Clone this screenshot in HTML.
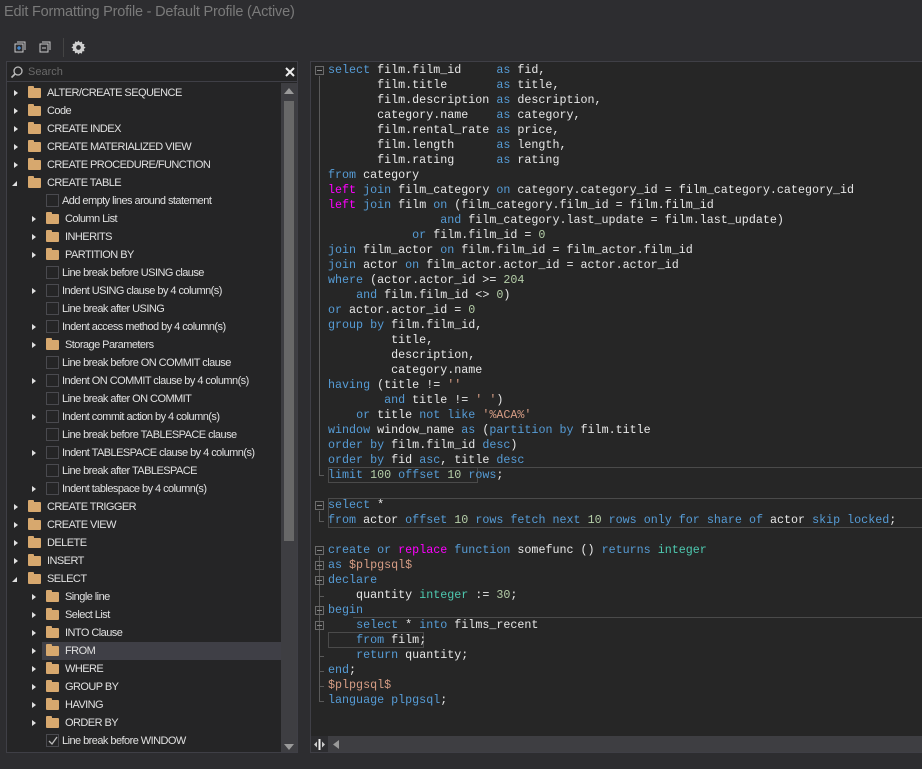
<!DOCTYPE html>
<html><head><style>
*{margin:0;padding:0;box-sizing:border-box}
body{width:922px;height:769px;background:#2d2d30;position:relative;overflow:hidden;font-family:"Liberation Sans",sans-serif}
.title{position:absolute;left:4px;top:4px;font-size:14.5px;color:#7a7a7a;letter-spacing:-0.2px}
.tb{position:absolute;top:40px}
.tree{position:absolute;left:6px;top:61px;width:292px;height:692px;border:1px solid #3f3f46;background:#252526;overflow:hidden}
.search{position:absolute;left:0;top:0;width:290px;height:20px;border-bottom:1px solid #3f3f46;background:#252526}
.search span{position:absolute;left:21px;top:4px;font-size:11px;color:#6a6a6a}
.sb{position:absolute;left:274px;top:21px;width:16px;height:670px;background:#3e3e42}
.thumb{position:absolute;left:3px;top:18px;width:10px;height:440px;background:#686868}
.row{position:absolute;left:0;height:18px;width:274px;font-size:11px;color:#e0e0e0;letter-spacing:-0.55px;line-height:18px;white-space:nowrap}
.row.sel{background:#3f3f46}
.arr{position:absolute;top:6px;width:0;height:0;border-top:3.5px solid transparent;border-bottom:3.5px solid transparent;border-left:4px solid #e0e0e0}
.arrd{position:absolute;top:7px;width:0;height:0;border-left:5px solid transparent;border-bottom:5px solid #e0e0e0}
.fold{position:absolute;top:4px;width:13px;height:10px;background:#d7a86e;border-radius:1px}
.fold:before{content:"";position:absolute;left:0;top:-2px;width:6px;height:3px;background:#d7a86e;border-radius:1px 1px 0 0}
.cb{position:absolute;top:2px;width:13px;height:13px;border:1px solid #4a4a4f;background:#252526}
.t{position:absolute;top:0}
.ed{position:absolute;left:310px;top:61px;width:613px;height:692px;border:1px solid #3f3f46;background:#262626;overflow:hidden}
pre{position:absolute;left:17px;top:1px;font-family:"Liberation Mono",monospace;font-size:11.7px;line-height:15px;color:#e8e8e8}
.k{color:#569cd6}.m{color:#ff00ff}.n{color:#b5cea8}.s{color:#d69d85}.ty{color:#4ec9b0}
.fm{position:absolute;left:4px;width:9px;height:9px;border:1px solid #6a6a6a}
.fm:after{content:"";position:absolute;left:1px;top:3px;width:5px;height:1px;background:#8a8a8a}
.vl{position:absolute;left:8px;width:1px;background:#5a5a5a}
.tk{position:absolute;left:8px;width:5px;height:1px;background:#5a5a5a}
.hb{position:absolute;left:0;top:674px;width:613px;height:17px;background:#3e3e42}
.box{position:absolute;border:1px solid #4a4a4a}
</style></head><body>
<div class="title">Edit Formatting Profile - Default Profile (Active)</div>
<svg class="tb" style="left:14px" width="14" height="14"><rect x="1" y="4" width="8" height="8" fill="none" stroke="#ccc"/><path d="M3 2h8v8" fill="none" stroke="#ccc"/><path d="M3 8h4M5 6v4" stroke="#4aa3ff"/></svg>
<svg class="tb" style="left:39px" width="14" height="14"><rect x="1" y="4" width="8" height="8" fill="none" stroke="#ccc"/><path d="M3 2h8v8" fill="none" stroke="#ccc"/><path d="M3 8h4" stroke="#ccc"/></svg>
<div style="position:absolute;left:63px;top:38px;width:1px;height:19px;background:#444"></div>
<svg class="tb" style="left:71px;top:40px" width="15" height="15" viewBox="0 0 16 16"><path d="M8 0.5l1.4 2 2.3-.8.3 2.4 2.4.3-.8 2.3 2 1.4-2 1.4.8 2.3-2.4.3-.3 2.4-2.3-.8L8 15.5l-1.4-2-2.3.8-.3-2.4-2.4-.3.8-2.3-2-1.4 2-1.4-.8-2.3 2.4-.3.3-2.4 2.3.8z" fill="#d0d0d0"/><circle cx="8" cy="8" r="2.5" fill="#2d2d30"/></svg>

<div class="tree">
 <div class="search"><svg style="position:absolute;left:3px;top:3px" width="14" height="14"><circle cx="8" cy="6" r="4" fill="none" stroke="#bbb" stroke-width="1.3"/><path d="M5 9l-3.5 3.5" stroke="#bbb" stroke-width="1.6"/></svg><span>Search</span>
 <svg style="position:absolute;left:278px;top:5px" width="10" height="10"><path d="M1 1l8 8M9 1l-8 8" stroke="#eee" stroke-width="2"/></svg></div>
 <div class="sb"><svg style="position:absolute;left:3px;top:5px" width="10" height="6"><path d="M0 6L5 0L10 6z" fill="#9a9a9a"/></svg><div class="thumb"></div><svg style="position:absolute;left:3px;top:661px" width="10" height="6"><path d="M0 0L5 6L10 0z" fill="#9a9a9a"/></svg></div>
 <div id="rows"></div>
</div>

<div class="ed">
<div class="box" style="left:17px;top:405px;width:596px;height:0;border-width:1px 0 0 0"></div>
<div class="box" style="left:17px;top:405px;width:150px;height:16px;border-top:none"></div>
<div class="box" style="left:17px;top:436px;width:596px;height:30px"></div>
<div class="box" style="left:42px;top:555px;width:571px;height:0;border-width:1px 0 0 0"></div>
<div class="box" style="left:17px;top:570px;width:96px;height:16px"></div>
<div class="fm" style="top:4px"></div><div class="vl" style="top:14px;height:399px"></div><div class="tk" style="top:413px"></div>
<div class="fm" style="top:439px"></div><div class="vl" style="top:449px;height:10px"></div><div class="tk" style="top:459px"></div>
<div class="fm" style="top:484px"></div><div class="vl" style="top:494px;height:145px"></div>
<div class="fm" style="top:499px"></div>
<div class="fm" style="top:514px"></div><div class="tk" style="top:534px"></div>
<div class="fm" style="top:544px"></div>
<div class="fm" style="top:559px"></div><div class="tk" style="top:594px"></div><div class="tk" style="top:609px"></div><div class="tk" style="top:624px"></div><div class="tk" style="top:639px"></div>
<pre><span class="k">select</span> film.film_id     <span class="k">as</span> fid,
       film.title       <span class="k">as</span> title,
       film.description <span class="k">as</span> description,
       category.name    <span class="k">as</span> category,
       film.rental_rate <span class="k">as</span> price,
       film.length      <span class="k">as</span> length,
       film.rating      <span class="k">as</span> rating
<span class="k">from</span> category
<span class="m">left</span> <span class="k">join</span> film_category <span class="k">on</span> category.category_id = film_category.category_id
<span class="m">left</span> <span class="k">join</span> film <span class="k">on</span> (film_category.film_id = film.film_id
                <span class="k">and</span> film_category.last_update = film.last_update)
            <span class="k">or</span> film.film_id = <span class="n">0</span>
<span class="k">join</span> film_actor <span class="k">on</span> film.film_id = film_actor.film_id
<span class="k">join</span> actor <span class="k">on</span> film_actor.actor_id = actor.actor_id
<span class="k">where</span> (actor.actor_id &gt;= <span class="n">204</span>
    <span class="k">and</span> film.film_id &lt;&gt; <span class="n">0</span>)
<span class="k">or</span> actor.actor_id = <span class="n">0</span>
<span class="k">group</span> <span class="k">by</span> film.film_id,
         title,
         description,
         category.name
<span class="k">having</span> (title != <span class="s">''</span>
        <span class="k">and</span> title != <span class="s">' '</span>)
    <span class="k">or</span> title <span class="k">not</span> <span class="k">like</span> <span class="s">'%ACA%'</span>
<span class="k">window</span> window_name <span class="k">as</span> (<span class="k">partition</span> <span class="k">by</span> film.title
<span class="k">order</span> <span class="k">by</span> film.film_id <span class="k">desc</span>)
<span class="k">order</span> <span class="k">by</span> fid <span class="k">asc</span>, title <span class="k">desc</span>
<span class="k">limit</span> <span class="n">100</span> <span class="k">offset</span> <span class="n">10</span> <span class="k">rows</span>;

<span class="k">select</span> *
<span class="k">from</span> actor <span class="k">offset</span> <span class="n">10</span> <span class="k">rows</span> <span class="k">fetch</span> <span class="k">next</span> <span class="n">10</span> <span class="k">rows</span> <span class="k">only</span> <span class="k">for</span> <span class="k">share</span> <span class="k">of</span> actor <span class="k">skip</span> <span class="k">locked</span>;

<span class="k">create</span> <span class="k">or</span> <span class="m">replace</span> <span class="k">function</span> somefunc () <span class="k">returns</span> <span class="ty">integer</span>
<span class="k">as</span> <span class="s">$plpgsql$</span>
<span class="k">declare</span>
    quantity <span class="ty">integer</span> := <span class="n">30</span>;
<span class="k">begin</span>
    <span class="k">select</span> * <span class="k">into</span> films_recent
    <span class="k">from</span> film;
    <span class="k">return</span> quantity;
<span class="k">end</span>;
<span class="s">$plpgsql$</span>
<span class="k">language</span> <span class="k">plpgsql</span>;</pre>
<div class="hb"><div style="position:absolute;left:0;top:0;width:17px;height:17px;background:#2d2d30"></div><svg style="position:absolute;left:3px;top:3px" width="11" height="11"><path d="M5.5 0v11" stroke="#eee" stroke-width="2"/><path d="M0 5.5l3-3v6zM11 5.5l-3-3v6z" fill="#ccc"/></svg><svg style="position:absolute;left:22px;top:4px" width="6" height="9"><path d="M6 0L0 4.5L6 9z" fill="#9a9a9a"/></svg></div>
</div>
<script>
var R=[
[1,'f','ALTER/CREATE SEQUENCE'],[1,'f','Code'],[1,'f','CREATE INDEX'],[1,'f','CREATE MATERIALIZED VIEW'],[1,'f','CREATE PROCEDURE/FUNCTION'],[1,'fo','CREATE TABLE'],
[2,'c','Add empty lines around statement'],[2,'f','Column List'],[2,'f','INHERITS'],[2,'f','PARTITION BY'],
[2,'c','Line break before USING clause'],[2,'ca','Indent USING clause by 4 column(s)'],[2,'c','Line break after USING'],[2,'ca','Indent access method by 4 column(s)'],
[2,'f','Storage Parameters'],[2,'c','Line break before ON COMMIT clause'],[2,'ca','Indent ON COMMIT clause by 4 column(s)'],[2,'c','Line break after ON COMMIT'],[2,'ca','Indent commit action by 4 column(s)'],
[2,'c','Line break before TABLESPACE clause'],[2,'ca','Indent TABLESPACE clause by 4 column(s)'],[2,'c','Line break after TABLESPACE'],[2,'ca','Indent tablespace by 4 column(s)'],
[1,'f','CREATE TRIGGER'],[1,'f','CREATE VIEW'],[1,'f','DELETE'],[1,'f','INSERT'],[1,'fo','SELECT'],
[2,'f','Single line'],[2,'f','Select List'],[2,'f','INTO Clause'],[2,'fs','FROM'],[2,'f','WHERE'],[2,'f','GROUP BY'],[2,'f','HAVING'],[2,'f','ORDER BY'],[2,'ck','Line break before WINDOW'],[2,'c','']];
var h='';
R.forEach(function(r,i){
 var top=22+i*18, o=r[0]==1?0:18, t=r[1], s='';
 if(t[0]=='f'){
  if(t=='fo') s+='<div class="arrd" style="left:'+(5+o)+'px"></div>'; else s+='<div class="arr" style="left:'+(7+o)+'px"></div>';
  s+='<div class="fold" style="left:'+(21+o)+'px"></div><span class="t" style="left:'+(40+o)+'px">'+r[2]+'</span>';
 } else {
  if(t=='ca') s+='<div class="arr" style="left:25px"></div>';
  s+='<div class="cb" style="left:39px"></div>';
  if(t=='ck') s+='<svg style="position:absolute;left:41px;top:4px" width="10" height="10"><path d="M1 5l3 3 5-7" fill="none" stroke="#bbb" stroke-width="1.3"/></svg>';
  s+='<span class="t" style="left:55px">'+r[2]+'</span>';
 }
 var sel=t=='fs'?' sel':'';
 h+='<div class="row'+sel+'" style="top:'+top+'px'+(sel?';left:35px;width:239px':'')+'">'+(sel?'<div style="position:absolute;left:-35px;top:0;width:274px;height:18px">'+s+'</div>':s)+'</div>';
});
document.getElementById('rows').innerHTML=h;
</script>
</body></html>
